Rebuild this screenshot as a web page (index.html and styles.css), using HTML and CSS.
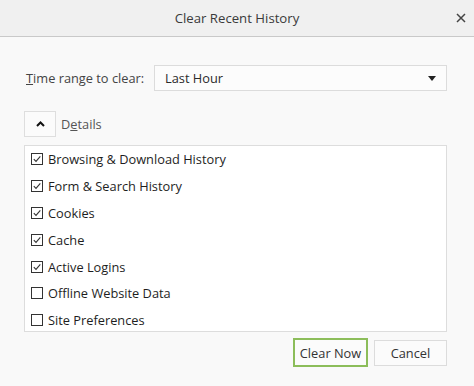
FILE: index.html
```html
<!DOCTYPE html>
<html lang="en">
<head>
    <meta charset="UTF-8">
    <meta name="viewport" content="width=device-width, initial-scale=1.0">
    <title>Clear Recent History</title>
    <link rel="stylesheet" href="styles.css">
</head>
<body>
    <div class="dialog">
        <div class="titlebar">
            <span></span>
            <span class="title">Clear Recent History</span>
            <span class="close">
                <svg width="10" height="10" viewBox="0 0 10 10"><path d="M1 1 L9 9 M9 1 L1 9" stroke="#444" stroke-width="1.5"/></svg>
            </span>
        </div>
        <div class="content">
            <div class="range-row">
                <span class="label"><u>T</u>ime range to clear:</span>
                <div class="select">
                    <span>Last Hour</span>
                    <svg width="8" height="5" viewBox="0 0 8 5"><path d="M0 0 L8 0 L4 5 Z" fill="#222"/></svg>
                </div>
            </div>
            <div class="details-row">
                <div class="toggle">
                    <svg width="9" height="6" viewBox="0 0 9 6"><path d="M1 5 L4.5 1.5 L8 5" stroke="#111" stroke-width="2" fill="none"/></svg>
                </div>
                <span class="details-label">D<u>e</u>tails</span>
            </div>
            <div class="item-list">
                <div class="item"><span class="box checked"></span>Browsing &amp; Download History</div>
                <div class="item"><span class="box checked"></span>Form &amp; Search History</div>
                <div class="item"><span class="box checked"></span>Cookies</div>
                <div class="item"><span class="box checked"></span>Cache</div>
                <div class="item"><span class="box checked"></span>Active Logins</div>
                <div class="item"><span class="box"></span>Offline Website Data</div>
                <div class="item"><span class="box"></span>Site Preferences</div>
            </div>
            <div class="buttons">
                <button class="btn primary">Clear Now</button>
                <button class="btn">Cancel</button>
            </div>
        </div>
    </div>
</body>
</html>
```

FILE: styles.css
```css
body {
    margin: 0;
    font-family: 'Open Sans', 'Noto Sans', sans-serif;
    background-color: #f9f9f9;
    color: #2b2b2b;
}
.dialog {
    width: 474px;
    height: 386px;
}
.titlebar {
    height: 36px;
    display: grid;
    grid-template-columns: 1fr auto 1fr;
    align-items: center;
    background: #f0f0f0;
    border-bottom: 1px solid #c9c9c9;
}
.title {
    font-size: 13.2px;
    color: #3a3a3a;
}
.close {
    justify-self: end;
    margin-right: 8px;
    display: flex;
}
.content {
    padding: 28px 27px 0 24px;
    font-size: 12.8px;
}
.range-row {
    display: flex;
    align-items: center;
}
.label {
    width: 128px;
    padding-left: 2px;
    color: #444;
}
.select {
    flex: 1;
    height: 24px;
    display: flex;
    align-items: center;
    justify-content: space-between;
    padding: 0 10px 0 10px;
    background: #fcfcfc;
    border: 1px solid #dcdcdc;
}
.details-row {
    display: flex;
    align-items: center;
    margin-top: 20px;
}
.toggle {
    width: 30px;
    height: 24px;
    display: flex;
    align-items: center;
    justify-content: center;
    background: #fbfbfb;
    border: 1px solid #dedede;
}
.details-label {
    margin-left: 5px;
    color: #555;
}
.item-list {
    margin-top: 8px;
    height: 185px;
    background: #fff;
    border: 1px solid #dddddd;
}
.item {
    height: 26.8px;
    display: flex;
    align-items: center;
    padding-left: 6px;
    color: #1e1e1e;
}
.box {
    width: 10px;
    height: 10px;
    border: 1px solid #333;
    margin-right: 5px;
    background: #fff center / 8px 8px no-repeat;
}
.box.checked {
    background-image: url("data:image/svg+xml,%3Csvg xmlns='http://www.w3.org/2000/svg' viewBox='0 0 8 8'%3E%3Cpath d='M0.8 4.2 L3 6.4 L7.3 1.4' stroke='%23333' stroke-width='1.1' fill='none'/%3E%3C/svg%3E");
}
.buttons {
    display: flex;
    justify-content: flex-end;
    align-items: center;
    gap: 6px;
    margin-top: 6px;
}
.btn {
    font-family: inherit;
    font-size: 12.8px;
    color: #333;
    width: 73px;
    height: 26px;
    background: #fbfbfb;
    border: 1px solid #dcdcdc;
    padding: 0;
}
.btn.primary {
    width: 75px;
    height: 29px;
    border: 2px solid #8cbd5a;
}
```
